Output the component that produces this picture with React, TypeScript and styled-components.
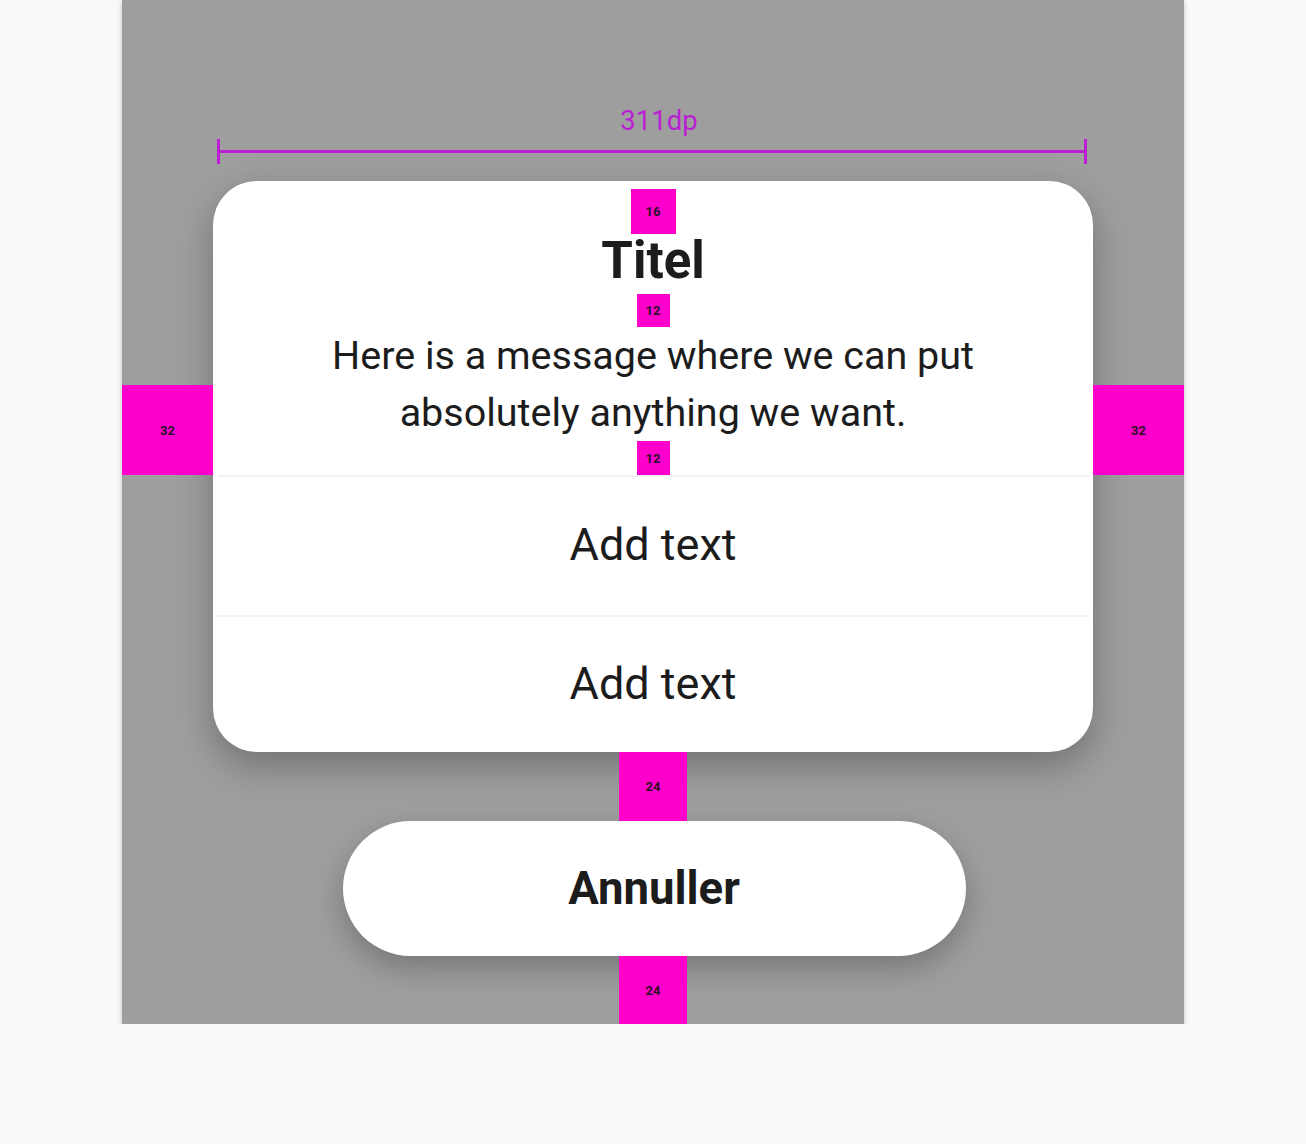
import styled, { createGlobalStyle } from "styled-components";

const GlobalStyle = createGlobalStyle`
  body {
    margin: 0;
    background: #f9f9f9;
    font-family: Roboto, "Liberation Sans", sans-serif;
  }
`;

export default function App() {
  return (
    <>
      <GlobalStyle />
      <Page>
        <Screen>
          <DimLabel>311dp</DimLabel>
          <DimRuler />

          <DialogRow>
            <Side>
              <Spacer w={91} h={90}>32</Spacer>
            </Side>

            <Card>
              <Spacer w={45} h={45}>16</Spacer>
              <Title>Titel</Title>
              <Spacer w={33} h={33}>12</Spacer>
              <Message>Here is a message where we can put absolutely anything we want.</Message>
              <Spacer w={33} h={34}>12</Spacer>
              <Divider />
              <Action h={138}>Add text</Action>
              <Divider />
              <Action h={135}>Add text</Action>
            </Card>

            <Side>
              <Spacer w={91} h={90}>32</Spacer>
            </Side>
          </DialogRow>

          <Spacer w={68} h={69}>24</Spacer>
          <CancelButton>Annuller</CancelButton>
          <Spacer w={68} h={68}>24</Spacer>
        </Screen>
      </Page>
    </>
  );
}

const Page = styled.div`
  padding-left: 122px;
  width: 1062px;
`;

const Screen = styled.div`
  width: 1062px;
  background: #9e9e9e;
  box-shadow: 0 2px 5px rgba(0, 0, 0, 0.22);
  padding-top: 105px;
  display: flex;
  flex-direction: column;
  align-items: center;
`;

const DimLabel = styled.div`
  font-size: 27.5px;
  line-height: 32px;
  color: #bb1fd4;
  margin-bottom: 2px;
  margin-left: 12px;
`;

const DimRuler = styled.div`
  position: relative;
  width: 870px;
  height: 25px;
  margin-right: 3px;
  border-left: 3px solid #bb1fd4;
  border-right: 3px solid #bb1fd4;
  box-sizing: border-box;
  margin-bottom: 17px;

  &::after {
    content: "";
    position: absolute;
    left: 0;
    right: 0;
    top: 11px;
    height: 3px;
    background: #bb1fd4;
  }
`;

const DialogRow = styled.div`
  width: 100%;
  display: grid;
  grid-template-columns: 91px 880px 91px;
`;

const Side = styled.div`
  display: flex;
  flex-direction: column;
  padding-top: 204px;
`;

const Spacer = styled.div<{ w: number; h: number }>`
  width: ${(p) => p.w}px;
  height: ${(p) => p.h}px;
  background: #ff00cc;
  display: flex;
  align-items: center;
  justify-content: center;
  font-size: 13px;
  font-weight: 700;
  color: #2a1226;
  flex-shrink: 0;
  position: relative;
  z-index: 1;
`;

const Card = styled.div`
  background: #fff;
  border-radius: 44px;
  box-shadow: 0 14px 36px rgba(0, 0, 0, 0.28);
  padding-top: 8px;
  display: flex;
  flex-direction: column;
  align-items: center;
  overflow: hidden;
`;

const Title = styled.h1`
  margin: 0 0 6px;
  font-size: 51px;
  line-height: 54px;
  font-weight: 700;
  color: #1c1c1c;
`;

const Message = styled.p`
  margin: 0;
  padding: 0 80px;
  font-size: 39.5px;
  line-height: 57px;
  text-align: center;
  color: #1c1c1c;
`;

const Divider = styled.div`
  align-self: stretch;
  margin: 0 3px 0 5px;
  height: 2px;
  background: #f2f2f2;
`;

const Action = styled.div<{ h: number }>`
  align-self: stretch;
  height: ${(p) => p.h}px;
  display: flex;
  align-items: center;
  justify-content: center;
  font-size: 45px;
  color: #1c1c1c;
  padding-bottom: 3px;
  box-sizing: border-box;
`;

const CancelButton = styled.button`
  width: 623px;
  height: 135px;
  border: none;
  border-radius: 68px;
  background: #fff;
  box-shadow: 0 12px 30px rgba(0, 0, 0, 0.25);
  font-family: Roboto, "Liberation Sans", sans-serif;
  font-size: 45.5px;
  font-weight: 700;
  color: #1c1c1c;
  margin-left: 2px;
`;
